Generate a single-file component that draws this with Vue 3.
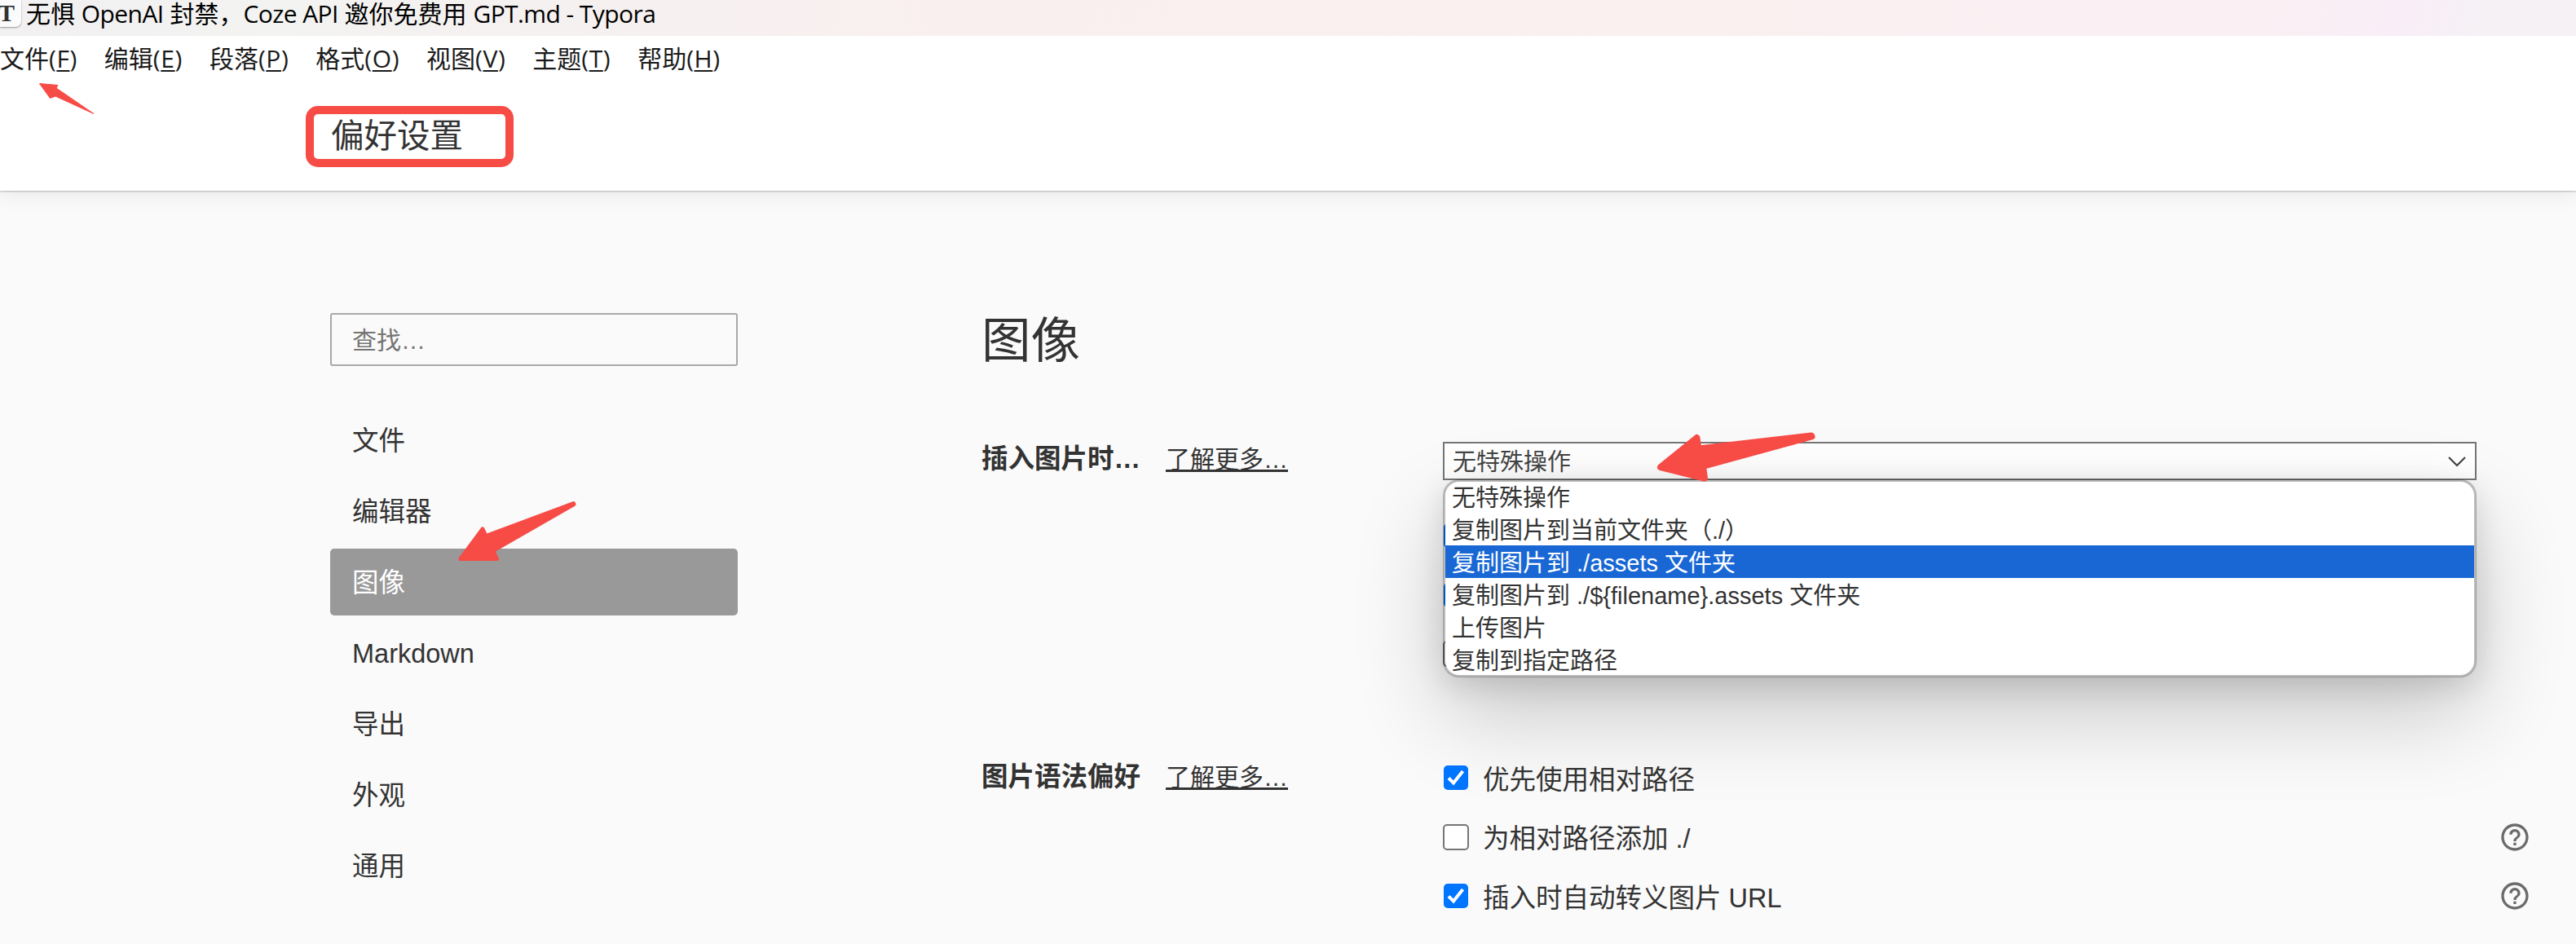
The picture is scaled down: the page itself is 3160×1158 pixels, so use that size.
<script setup>
const menus = [
  { label: '文件', key: 'F' },
  { label: '编辑', key: 'E' },
  { label: '段落', key: 'P' },
  { label: '格式', key: 'O' },
  { label: '视图', key: 'V' },
  { label: '主题', key: 'T' },
  { label: '帮助', key: 'H' },
]
const nav = ['文件', '编辑器', '图像', 'Markdown', '导出', '外观', '通用']
const options = [
  '无特殊操作',
  '复制图片到当前文件夹（./）',
  '复制图片到 ./assets 文件夹',
  '复制图片到 ./${filename}.assets 文件夹',
  '上传图片',
  '复制到指定路径',
]
const checks = [
  { label: '优先使用相对路径', on: true, help: false },
  { label: '为相对路径添加 ./', on: false, help: true },
  { label: '插入时自动转义图片 URL', on: true, help: true },
]
const insertChecks = [true, true, false]
</script>

<template>
  <div class="window">
    <div class="titlebar">
      <span class="doc"><span class="doc-letter">T</span></span>
      <span class="title">无惧 <span class="lat">OpenAI</span> 封禁，<span class="lat">Coze API</span> 邀你免费用 <span class="lat">GPT.md - Typora</span></span>
    </div>
    <div class="menubar">
      <span v-for="m in menus" :key="m.key" class="menu">{{ m.label }}<span class="key">(<u>{{ m.key }}</u>)</span></span>
    </div>
    <header class="header"><div class="header-title">偏好设置</div></header>

    <div class="body">
      <aside class="side">
        <div class="search">查找…</div>
        <nav class="nav">
          <div v-for="(n, i) in nav" :key="n" class="nav-item" :class="{ active: i === 2 }">{{ n }}</div>
        </nav>
      </aside>

      <main class="main">
        <h1>图像</h1>
        <section class="row first">
          <div class="row-label"><b>插入图片时…</b><a>了解更多…</a></div>
          <div class="row-field">
            <div class="select">
              <span>无特殊操作</span>
              <svg width="24" height="14" viewBox="0 0 24 14"><path d="M2 2 12 12 22 2" fill="none" stroke="#444" stroke-width="2.2" /></svg>
            </div>
            <div class="under">
              <div v-for="(on, i) in insertChecks" :key="i" class="check-line">
                <span class="box" :class="{ on }"></span>
              </div>
            </div>
            <div class="popup">
              <div v-for="(o, i) in options" :key="o" class="option" :class="{ hot: i === 2 }">{{ o }}</div>
            </div>
          </div>
        </section>
        <section class="row">
          <div class="row-label second"><b>图片语法偏好</b><a>了解更多…</a></div>
          <div class="row-field checks">
            <div v-for="c in checks" :key="c.label" class="check-line">
              <span class="box" :class="{ on: c.on }">
                <svg v-if="c.on" width="30" height="30" viewBox="0 0 30 30"><path d="M6 15.500 12 21.500 23.500 7" fill="none" stroke="#fff" stroke-width="4" /></svg>
              </span>
              <span class="check-text">{{ c.label }}</span>
              <svg v-if="c.help" class="help" width="40" height="40" viewBox="0 0 24 24"><path fill="#6b6b6b" d="M11 18h2v-2h-2v2zm1-16C6.48 2 2 6.48 2 12s4.48 10 10 10 10-4.48 10-10S17.52 2 12 2zm0 18c-4.41 0-8-3.59-8-8s3.59-8 8-8 8 3.59 8 8-3.59 8-8 8zm0-14c-2.21 0-4 1.79-4 4h2c0-1.1.9-2 2-2s2 .9 2 2c0 2-3 1.75-3 5h2c0-2.25 3-2.5 3-5 0-2.21-1.79-4-4-4z" /></svg>
            </div>
          </div>
        </section>
      </main>
    </div>

    <svg class="marks" width="3160" height="1158" viewBox="0 0 3160 1158">
      <rect x="380" y="135" width="245" height="65" rx="10" fill="none" stroke="#f74b46" stroke-width="10" />
      <g fill="#f74b46" stroke="#f74b46" stroke-linejoin="round">
        <path d="M48.500 102.500 71 104.500 69 108 115 139.500 68 118 61.500 120.500Z" stroke-width="1" />
        <path d="M565 685.500 592 649 596 657.500 703.500 617.500 704 618.500 604.500 675.500 609.500 685.500Z" stroke-width="5" />
        <path d="M2037 573 2081.500 537 2083.500 550.500 2222 534.500 2222.500 535.500 2089 572 2091 586.500Z" stroke-width="8" />
      </g>
    </svg>
  </div>
</template>

<style>
body {
  margin: 0;
}
</style>

<style scoped>
.window {
  position: relative;
  display: flex;
  flex-direction: column;
  width: 3160px;
  height: 1158px;
  overflow: hidden;
  background: #fafafa;
  color: #333;
  font-family: "Liberation Sans", "Noto Sans CJK SC", sans-serif;
  font-weight: 400;
}
.titlebar {
  display: flex;
  align-items: center;
  height: 44px;
  flex: none;
  background: linear-gradient(100deg, #f2f0f2 0%, #f3f3f1 11%, #f6f0f0 26%, #faefef 38%, #faf0ef 66%, #faeff1 72%, #faeff3 88%, #f9edf7 93%, #f5f1f5 96%);
  color: #000;
  font-family: "Open Sans", "Noto Sans CJK SC", sans-serif;
}
.doc {
  width: 26px;
  height: 33px;
  margin: -12px 6px 0 0;
  background: #fbfbfb;
  border-radius: 0 0 7px 0;
  box-shadow: 0 1px 2px #999;
  overflow: hidden;
}
.doc-letter {
  display: block;
  margin: 1px 0 0 -2px;
  color: #333;
  font: bold 30px/30px "Liberation Serif", serif;
}
.title {
  font-size: 30px;
  line-height: 34px;
  margin-top: -11px;
  white-space: nowrap;
}
.title .lat {
  letter-spacing: -0.58px;
}
.menubar {
  position: relative;
  z-index: 1;
  display: flex;
  flex: none;
  gap: 33px;
  height: 60px;
  background: #fff;
  color: #1a1a1a;
  font-family: "Open Sans", "Noto Sans CJK SC", sans-serif;
}
.menu {
  font-size: 30px;
  line-height: 55px;
  white-space: nowrap;
}
.key {
  letter-spacing: 0.55px;
}
.menu u {
  text-decoration-thickness: 2px;
  text-underline-offset: 3px;
  text-decoration-skip-ink: none;
}
.header {
  position: relative;
  flex: none;
  height: 130px;
  background: #fff;
  box-shadow: 0 1px 2px rgba(0, 0, 0, 0.25), 0 4px 24px rgba(0, 0, 0, 0.08);
}
.header-title {
  padding: 33px 0 0 406px;
  font-size: 40.500px;
  line-height: 60px;
}
.body {
  display: flex;
  flex: 1;
  padding-left: 405px;
}
.side {
  width: 500px;
  padding-top: 150px;
}
.search {
  box-sizing: border-box;
  height: 65px;
  padding-left: 25px;
  border: 2px solid #a9a9a9;
  border-radius: 3px;
  color: #757575;
  font-size: 30px;
  line-height: 63px;
}
.nav {
  display: flex;
  flex-direction: column;
  gap: 5px;
  margin-top: 50px;
}
.nav-item {
  height: 82px;
  padding-left: 27px;
  border-radius: 5px;
  font-size: 32.500px;
  line-height: 84px;
}
.nav-item.active {
  background: #999;
  color: #fff;
}
.main {
  width: 1900px;
  margin-left: 299px;
  padding-top: 136px;
}
h1 {
  box-sizing: border-box;
  margin: 0;
  height: 172px;
  padding-top: 3px;
  font-size: 60.500px;
  font-weight: 400;
  line-height: 90px;
}
.row {
  display: flex;
}
.row.first {
  height: 389px;
}
.row-label {
  display: flex;
  width: 566px;
  line-height: 42px;
}
.row-label.second {
  padding-top: 1px;
}
.row-label b {
  width: 226px;
  font-size: 32.500px;
  font-weight: 700;
  white-space: nowrap;
}
.row-label a {
  margin-top: 1px;
  font-size: 30px;
  text-decoration: underline;
  text-decoration-thickness: 3px;
  text-decoration-skip-ink: none;
  text-underline-offset: 2px;
}
.row-field {
  position: relative;
  width: 1268px;
}
.select {
  box-sizing: border-box;
  display: flex;
  align-items: center;
  justify-content: space-between;
  height: 47px;
  padding: 0 10px;
  border: 2px solid #767676;
  background: #fff;
  color: #444;
  font-size: 29px;
  line-height: 40px;
}
.select span {
  padding-top: 2px;
}
.under {
  padding-top: 32px;
}
.popup {
  position: absolute;
  left: 0;
  top: 46px;
  box-sizing: border-box;
  width: 1268px;
  height: 243px;
  border: 3px solid rgba(0, 0, 0, 0.25);
  border-radius: 20px;
  background: #fff;
  background-clip: padding-box;
  box-shadow: 0 10px 36px rgba(0, 0, 0, 0.12), 0 45px 110px rgba(0, 0, 0, 0.2);
  overflow: hidden;
}
.option {
  height: 40px;
  padding-left: 8px;
  font-size: 29px;
  line-height: 45px;
  white-space: nowrap;
}
.option:first-child {
  margin-top: -2px;
}
.option.hot {
  background: #1967d4;
  color: #fff;
}
.check-line {
  display: flex;
  align-items: center;
  height: 72.500px;
}
.checks {
  margin-top: -13px;
}
.box {
  box-sizing: border-box;
  width: 32px;
  height: 32px;
  flex: none;
  border: 2px solid #767676;
  border-radius: 5px;
  background: #fff;
}
.box.on {
  width: 30px;
  height: 30px;
  margin: 0 1px;
  border: 0;
  background: #0075ff;
}
.box svg {
  display: block;
}
.check-text {
  padding: 5px 0 0 17px;
  font-size: 32.500px;
  line-height: 40px;
  white-space: nowrap;
}
.help {
  flex: none;
  margin: 0 -67px 0 auto;
}
.marks {
  position: absolute;
  z-index: 2;
  left: 0;
  top: 0;
}
</style>
